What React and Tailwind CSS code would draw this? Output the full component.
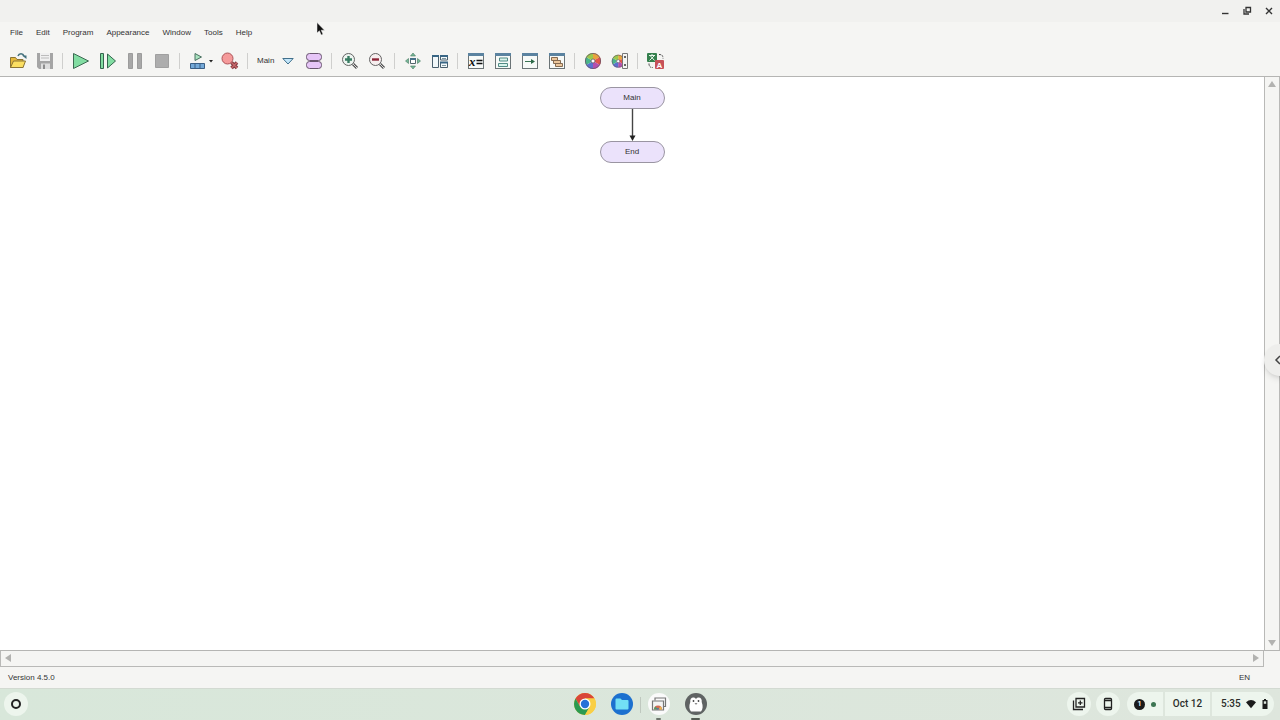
import React from 'react';

const menus = ['File', 'Edit', 'Program', 'Appearance', 'Window', 'Tools', 'Help'];

function Icon({ children }) {
  return (
    <svg className="h-[18px] w-[18px]" viewBox="0 0 18 18" fill="none" aria-hidden="true">
      {children}
    </svg>
  );
}

function ToolButton({ label, children }) {
  return (
    <button type="button" aria-label={label} className="flex h-[30px] w-[27px] items-center justify-center">
      <Icon>{children}</Icon>
    </button>
  );
}

function Separator() {
  return (
    <div className="flex h-4 w-[9px] justify-center">
      <div className="w-px bg-[#cfcfcd]" />
    </div>
  );
}

// window outline shared by the four "open window" buttons
function WindowFrame() {
  return (
    <>
      <rect x="1.5" y="1.5" width="15" height="15" fill="#f7faf8" stroke="#6b7476" />
      <path d="M1 2.5h16" stroke="#5b83a0" strokeWidth="3" />
    </>
  );
}

function ColorWheel() {
  return (
    <>
      <path d="M9 9V1a8 8 0 0 1 6.9 4z" fill="#e8a33c" />
      <path d="M9 9l6.9-4a8 8 0 0 1 0 8z" fill="#e2554a" />
      <path d="M9 9l6.9 4A8 8 0 0 1 9 17z" fill="#b44fae" />
      <path d="M9 9v8a8 8 0 0 1-6.9-4z" fill="#5a72d0" />
      <path d="M9 9l-6.9 4a8 8 0 0 1 0-8z" fill="#49b58a" />
      <path d="M9 9L2.1 5A8 8 0 0 1 9 1z" fill="#9ac94c" />
      <circle cx="9" cy="9" r="7.6" stroke="#6b566b" strokeWidth=".8" />
      <circle cx="9" cy="9" r="2" fill="#fff" stroke="#665866" strokeWidth=".8" />
    </>
  );
}

function Toolbar() {
  return (
    <div className="flex h-8 items-center pl-1 pt-[2px]">
      <ToolButton label="Open">
        <path d="M1.5 15.5v-10h5l1.5 2h6v8z" fill="#e5b93c" stroke="#8b7434" />
        <path d="M1.5 15.5l3-6.5h12L14 15.5z" fill="#fbdf62" stroke="#8b7434" />
        <path d="M9 4c1-3 5-3 6 0" stroke="#42707c" strokeWidth="1.5" />
        <path d="M13 3.5h4.5V7z" fill="#42707c" />
      </ToolButton>
      <ToolButton label="Save">
        <path d="M1 1h16v16H3l-2-2z" fill="#a5a5a5" />
        <path d="M4 1h10v8H4z" fill="#f0f0f0" />
        <path d="M5 3.5h8M5 6h8" stroke="#bcbcbc" />
        <path d="M5 11.5h9V17H5z" fill="#dedede" />
        <path d="M7 12.5h2V17H7z" fill="#8d8d8d" />
      </ToolButton>
      <Separator />
      <ToolButton label="Run">
        <path d="M1.5 1.5l15 7.5-15 7.5z" fill="#82dda2" stroke="#3c6a52" />
      </ToolButton>
      <ToolButton label="Step">
        <path d="M1.5 1.5h3v15h-3zM8.5 2l8 7-8 7z" fill="#82dda2" stroke="#35664e" />
      </ToolButton>
      <ToolButton label="Pause">
        <path d="M2.5 1.5h4v15h-4zM11.5 1.5h4v15h-4z" fill="#a8a8a8" stroke="#9c9c9c" />
      </ToolButton>
      <ToolButton label="Stop">
        <path d="M2.5 2.5h13v13h-13z" fill="#adadad" stroke="#a0a0a0" />
      </ToolButton>
      <Separator />
      <button type="button" aria-label="Speed" className="flex h-[30px] w-8 items-center pl-[5px]">
        <Icon>
          <path d="M6 1.5L12.5 5 6 8.5z" fill="#a8e2be" stroke="#4a7060" />
          <path d="M1.5 11.5h14v5h-14z" fill="#74a9d8" stroke="#3b5f85" />
          <path d="M6 11.5v5M11 11.5v5" stroke="#3b5f85" />
        </Icon>
        <svg className="h-2 w-2" viewBox="0 0 8 8" aria-hidden="true">
          <path d="M2 3h4L4 5.5z" fill="#222" />
        </svg>
      </button>
      <ToolButton label="Clear breakpoints">
        <circle cx="6.5" cy="6.5" r="5.5" fill="#f59a9a" stroke="#ad5458" />
        <path d="M10.5 10.5L16 16M16 10.5L10.5 16" stroke="#853c42" strokeWidth="3.6" />
        <path d="M10.5 10.5L16 16M16 10.5L10.5 16" stroke="#c8686b" strokeWidth="1.4" />
      </ToolButton>
      <Separator />
      <button type="button" className="flex h-[30px] w-12 items-center gap-2 pl-[5px]">
        <span>Main</span>
        <svg className="h-2 w-3 shrink-0" viewBox="0 0 12 8" aria-hidden="true">
          <path d="M.8 1.5h10.4L6 7z" fill="#c3e6fa" stroke="#41708c" />
        </svg>
      </button>
      <ToolButton label="Functions">
        <rect x="1.5" y="1.5" width="15" height="7" rx="3" fill="#e6c5f7" stroke="#69566f" />
        <rect x="1.5" y="9.5" width="15" height="7" rx="3" fill="#e6c5f7" stroke="#69566f" />
      </ToolButton>
      <Separator />
      <ToolButton label="Zoom in">
        <path d="M12 12l4 4" stroke="#555" strokeWidth="3" />
        <path d="M12 12l4 4" stroke="#d9d9d9" />
        <circle cx="7.5" cy="7.5" r="6" fill="#edf4f0" stroke="#646464" />
        <path d="M7.5 4v7M4 7.5h7" stroke="#397c62" strokeWidth="2.4" />
      </ToolButton>
      <ToolButton label="Zoom out">
        <path d="M12 12l4 4" stroke="#555" strokeWidth="3" />
        <path d="M12 12l4 4" stroke="#d9d9d9" />
        <circle cx="7.5" cy="7.5" r="6" fill="#f6eeee" stroke="#646464" />
        <path d="M4 7.5h7" stroke="#8c2537" strokeWidth="2.4" />
      </ToolButton>
      <Separator />
      <ToolButton label="Fit to window">
        <path d="M6.5 6.5h5v5h-5z" fill="#fff" stroke="#53666c" />
        <path d="M6 7h6" stroke="#467087" strokeWidth="2" />
        <path d="M9 1l2.5 3h-5zM9 17l-2.5-3h5zM1.5 9l3-2.5v5zM16.5 9l-3-2.5v5z" fill="#76b898" stroke="#47785f" strokeWidth=".6" />
      </ToolButton>
      <ToolButton label="Arrange windows">
        <path d="M1.5 3.5h6v12h-6zM9.5 3.5h7V8h-7zM9.5 10.5h7v5h-7z" fill="#f2f8fa" stroke="#4a5f6d" />
        <path d="M1 4h7M9 4h8M9 10.5h8" stroke="#396685" strokeWidth="2" />
        <path d="M11 6.5h4M11 13.5h4" stroke="#7b959e" />
      </ToolButton>
      <Separator />
      <ToolButton label="Variables">
        <WindowFrame />
        <text x="2" y="14" fill="#111" className="font-['Liberation_Serif',serif] text-[13px] font-bold italic">x</text>
        <path d="M9.5 8.5h6M9.5 11.5h6" stroke="#111" strokeWidth="1.5" />
      </ToolButton>
      <ToolButton label="Console">
        <WindowFrame />
        <path d="M5.5 6h8v3h-8zM4.5 11.5h9v3h-9z" fill="#d9f4ec" stroke="#538b85" />
      </ToolButton>
      <ToolButton label="Turtle graphics">
        <WindowFrame />
        <path d="M4 9.5h7" stroke="#3b7454" />
        <path d="M10 7l4 2.5-4 2.5z" fill="#2c6a48" />
      </ToolButton>
      <ToolButton label="Source code">
        <WindowFrame />
        <path d="M3.5 5.5h6v3h-6zM5.500 8.500h7v3h-7zM7.500 11.500h7v3h-7z" fill="#ecc79c" stroke="#856b51" />
      </ToolButton>
      <Separator />
      <ToolButton label="Color scheme">
        <ColorWheel />
      </ToolButton>
      <ToolButton label="Chart style">
        <g transform="translate(0 2) scale(.8)">
          <ColorWheel />
        </g>
        <path d="M11.5 1.5h5v15h-5z" fill="#f5f5f3" stroke="#777" />
        <circle cx="14" cy="5" r="1" fill="#333" />
        <circle cx="14" cy="13" r="1" fill="#333" />
      </ToolButton>
      <Separator />
      <ToolButton label="Language">
        <rect x="0" y="1" width="10" height="9" rx="1" fill="#35804d" />
        <path d="M2 3.5h6M5 2v1.500M7 4L2.500 8.500M3.500 4L7.500 8.500" stroke="#e5f4e8" />
        <rect x="8" y="8" width="9" height="9" rx="1" fill="#c75158" />
        <text x="9.5" y="15.5" fill="#fff" className="text-[8px] font-bold">A</text>
        <path d="M12 2.5c3 0 4 1 4 4M2 11.5c0 3 1 4 4 4" stroke="#444" strokeDasharray="2 1" />
      </ToolButton>
    </div>
  );
}

function TitleBar() {
  return (
    <div className="flex h-[22px] items-center justify-end gap-[10px] bg-[#f1f1ef] pr-[5px]">
      <button type="button" aria-label="Minimize">
        <svg className="h-3 w-3" viewBox="0 0 12 12" fill="none">
          <path d="M3 8.5h6.5" stroke="#333" strokeWidth="1.4" />
        </svg>
      </button>
      <button type="button" aria-label="Restore">
        <svg className="h-3 w-3" viewBox="0 0 12 12" fill="none">
          <path d="M5 2.5h4.5V7H5zM3 4v5h5" stroke="#333" strokeWidth="1.3" />
        </svg>
      </button>
      <button type="button" aria-label="Close">
        <svg className="h-3 w-3" viewBox="0 0 12 12" fill="none">
          <path d="M3 3l6 6M9 3L3 9" stroke="#333" strokeWidth="1.4" />
        </svg>
      </button>
    </div>
  );
}

function ScrollArrow({ label, d }) {
  return (
    <button type="button" aria-label={label} className="flex h-[14px] w-[14px] items-center justify-center">
      <svg className="h-2 w-2" viewBox="0 0 8 8" aria-hidden="true">
        <path d={d} fill="#b2b2b0" />
      </svg>
    </button>
  );
}

function Flowchart() {
  return (
    <div className="flex flex-1 flex-col items-center bg-white pt-[10px]">
      <div className="flex h-[22px] w-[65px] items-center justify-center rounded-full border border-[#9a95a2] bg-[#ebe2fb]">
        Main
      </div>
      <svg className="h-8 w-[9px]" viewBox="0 0 9 32" aria-hidden="true">
        <path d="M4.5 0v28" stroke="#444" strokeWidth="1.4" />
        <path d="M1.5 26.5h6L4.5 32z" fill="#222" />
      </svg>
      <div className="flex h-[22px] w-[65px] items-center justify-center rounded-full border border-[#9a95a2] bg-[#ebe2fb]">
        End
      </div>
    </div>
  );
}

function Shelf() {
  return (
    <footer className="grid h-8 shrink-0 grid-cols-[1fr_auto_1fr] items-start border-t border-[#d3dad2] bg-linear-to-r from-[#d8e7da] to-[#dee6dd] font-[Roboto,sans-serif] text-[10px] font-medium text-[#2a2d2a]">
      <button type="button" aria-label="Launcher" className="ml-1 mt-[3px] flex h-6 w-6 items-center justify-center rounded-full bg-[#edf5ed]">
        <span className="h-[10px] w-[10px] rounded-full border-2 border-[#222]" />
      </button>

      <div className="flex">
        <button type="button" aria-label="Chrome" className="flex h-[30px] w-[37px] items-center justify-center">
          <svg className="h-[22px] w-[22px]" viewBox="0 0 22 22">
            <circle cx="11" cy="11" r="11" fill="#f9cf45" />
            <path d="M11 11V5.500h9.500A11 11 0 0 0 1.500 5.500l4.700 8.300z" fill="#d9463a" />
            <path d="M1.500 5.500A11 11 0 0 0 11 22l4.800-8.300L11 11l-4.800 2.800z" fill="#2b9a50" />
            <path d="M11 5.500h9.500A11 11 0 0 1 11 22l4.800-8.300z" fill="#f9cf45" />
            <circle cx="11" cy="11" r="5.500" fill="#fff" />
            <circle cx="11" cy="11" r="4.200" fill="#2870d8" />
          </svg>
        </button>
        <button type="button" aria-label="Files" className="flex h-[30px] w-[37px] items-center justify-center">
          <svg className="h-[22px] w-[22px]" viewBox="0 0 22 22">
            <circle cx="11" cy="11" r="11" fill="#1c70cf" />
            <path d="M4.500 6.500a1 1 0 0 1 1-1h4L11 7h5.500a1 1 0 0 1 1 1v7.500a1 1 0 0 1-1 1h-11a1 1 0 0 1-1-1z" fill="#72dff5" />
          </svg>
        </button>
        <button type="button" aria-label="Web apps" className="relative flex h-[30px] w-[37px] items-center justify-center">
          <span className="absolute left-0 top-2 h-4 w-px bg-[#bfc8bf]" />
          <svg className="h-[22px] w-[22px]" viewBox="0 0 22 22" fill="none">
            <circle cx="11" cy="11" r="11" fill="#fafafa" />
            <path d="M7 7.500V5h10.500v8.500H15.500" stroke="#777" strokeWidth="1.200" />
            <path d="M4.500 8h11v9h-11z" fill="#f4f4f4" stroke="#777" strokeWidth="1.200" />
            <path d="M6 16.500a4 4 0 0 1 8 0z" fill="#d46952" />
            <path d="M6 16.500a4 4 0 0 1 1.500-3l2.500 3z" fill="#4d9b68" />
            <path d="M14 16.500a4 4 0 0 0-1.500-3l-2.500 3z" fill="#e7b54a" />
            <path d="M8.500 16.500a1.500 1.500 0 0 1 3 0z" fill="#4b73b7" />
          </svg>
          <span className="absolute -bottom-px left-4 h-[2px] w-[5px] rounded-full bg-[#6c746c]" />
        </button>
        <button type="button" aria-label="Linux apps" className="relative flex h-[30px] w-[37px] items-center justify-center">
          <svg className="h-[22px] w-[22px]" viewBox="0 0 22 22">
            <circle cx="11" cy="11" r="11" fill="#5f6363" />
            <path d="M11 6C8.500 3 4.500 5 5.300 9c-1.600 4-1.100 7.500.7 9.500h10c1.800-2 2.300-5.500.7-9.500.8-4-3.200-6-5.700-3z" fill="#fff" />
            <circle cx="8.500" cy="8" r=".9" fill="#444" />
            <circle cx="13.500" cy="8" r=".9" fill="#444" />
            <path d="M9.500 10h3L11 12z" fill="#8a8a8a" />
          </svg>
          <span className="absolute -bottom-px left-[14px] h-[2px] w-[9px] rounded-full bg-[#535b53]" />
        </button>
      </div>

      <div className="mt-[3px] flex items-center justify-end pr-[6px]">
        <button type="button" aria-label="Holding space" className="mr-[5px] flex h-6 w-6 items-center justify-center rounded-full bg-[#edf5ed]">
          <svg className="h-[14px] w-[14px]" viewBox="0 0 14 14" fill="none" stroke="#222" strokeWidth="1.3">
            <path d="M4 1.5h8.500V10H4zM1.500 3.500v9H11M8.300 3.500V8M6 5.800h4.500" />
          </svg>
        </button>
        <button type="button" aria-label="Phone hub" className="mr-[7px] flex h-6 w-6 items-center justify-center rounded-full bg-[#edf5ed]">
          <svg className="h-[14px] w-[14px]" viewBox="0 0 14 14" fill="none" stroke="#222" strokeWidth="1.3">
            <rect x="3.5" y="1.5" width="7" height="11" rx="1" />
            <path d="M3.500 3.500h7M3.500 10.500h7" />
          </svg>
        </button>
        <div className="flex gap-[2px]">
          <button type="button" aria-label="Notifications" className="flex h-6 w-9 items-center gap-[6px] rounded-l-full bg-[#edf5ed] pl-[7px]">
            <span className="flex h-[11px] w-[11px] items-center justify-center rounded-full bg-[#1b1b1b] text-[8px] text-white">1</span>
            <span className="h-[5px] w-[5px] rounded-full bg-[#3c7552]" />
          </button>
          <button type="button" className="h-6 w-[45px] bg-[#edf5ed]">Oct 12</button>
          <button type="button" className="flex h-6 w-[62px] items-center gap-[5px] rounded-r-full bg-[#edf5ed] pl-[9px]">
            5:35
            <svg className="h-[10px] w-[10px] shrink-0" viewBox="0 0 10 10">
              <path d="M0 3.200q5-4.400 10 0L5 9.200z" fill="#1b1b1b" />
            </svg>
            <svg className="h-[10px] w-[8px] shrink-0" viewBox="0 0 8 10">
              <path d="M3 0h2v1h1.500v9h-5V1H3z" fill="#1b1b1b" />
              <path d="M2.800 2.300h2.400v2.500H2.800z" fill="#dfe8df" />
            </svg>
          </button>
        </div>
      </div>
    </footer>
  );
}

export default function App() {
  return (
    <div className="relative flex h-screen flex-col overflow-hidden bg-[#f5f5f3] font-['Liberation_Sans',Arial,sans-serif] text-[8px] leading-[10px] text-[#333]">
      <TitleBar />
      <nav className="flex h-[22px] items-center gap-[13px] pl-[10px]">
        {menus.map((m) => (
          <button key={m} type="button">
            {m}
          </button>
        ))}
      </nav>
      <Toolbar />

      <main className="flex min-h-0 flex-1 flex-col">
        <div className="flex min-h-0 flex-1 border-y border-[#b5b5b3]">
          <Flowchart />
          <div className="flex w-4 flex-col justify-between border-x border-[#b9b9b7]">
            <ScrollArrow label="Scroll up" d="M0 7l4-6 4 6z" />
            <ScrollArrow label="Scroll down" d="M0 1l4 6 4-6z" />
          </div>
        </div>
        <div className="mr-4 flex h-4 justify-between border-x border-b border-[#b9b9b7]">
          <ScrollArrow label="Scroll left" d="M7 0L1 4l6 4z" />
          <ScrollArrow label="Scroll right" d="M1 0l6 4-6 4z" />
        </div>
      </main>

      <div className="flex h-[21px] shrink-0 items-center justify-between pl-2 pr-[30px]">
        <span>Version 4.5.0</span>
        <span>EN</span>
      </div>
      <Shelf />

      {/* side panel handle, half off the right edge */}
      <button type="button" aria-label="Open side panel" className="absolute -right-4 top-1/2 flex h-8 w-8 -translate-y-1/2 items-center rounded-full bg-[#eeeeec] pl-[9px] shadow-md">
        <svg className="h-[10px] w-[8px]" viewBox="0 0 8 10" fill="none">
          <path d="M7 1L3 5l4 4" stroke="#444" strokeWidth="1.5" />
        </svg>
      </button>

      {/* mouse pointer */}
      <svg className="absolute left-[316px] top-[22px] h-[14px] w-[10px]" viewBox="0 0 10 14" aria-hidden="true">
        <path d="M1 .5V11l2.400-2.200L5.200 13l1.800-.8-1.800-4h3.300z" fill="#111" stroke="#eee" strokeWidth=".5" />
      </svg>
    </div>
  );
}
